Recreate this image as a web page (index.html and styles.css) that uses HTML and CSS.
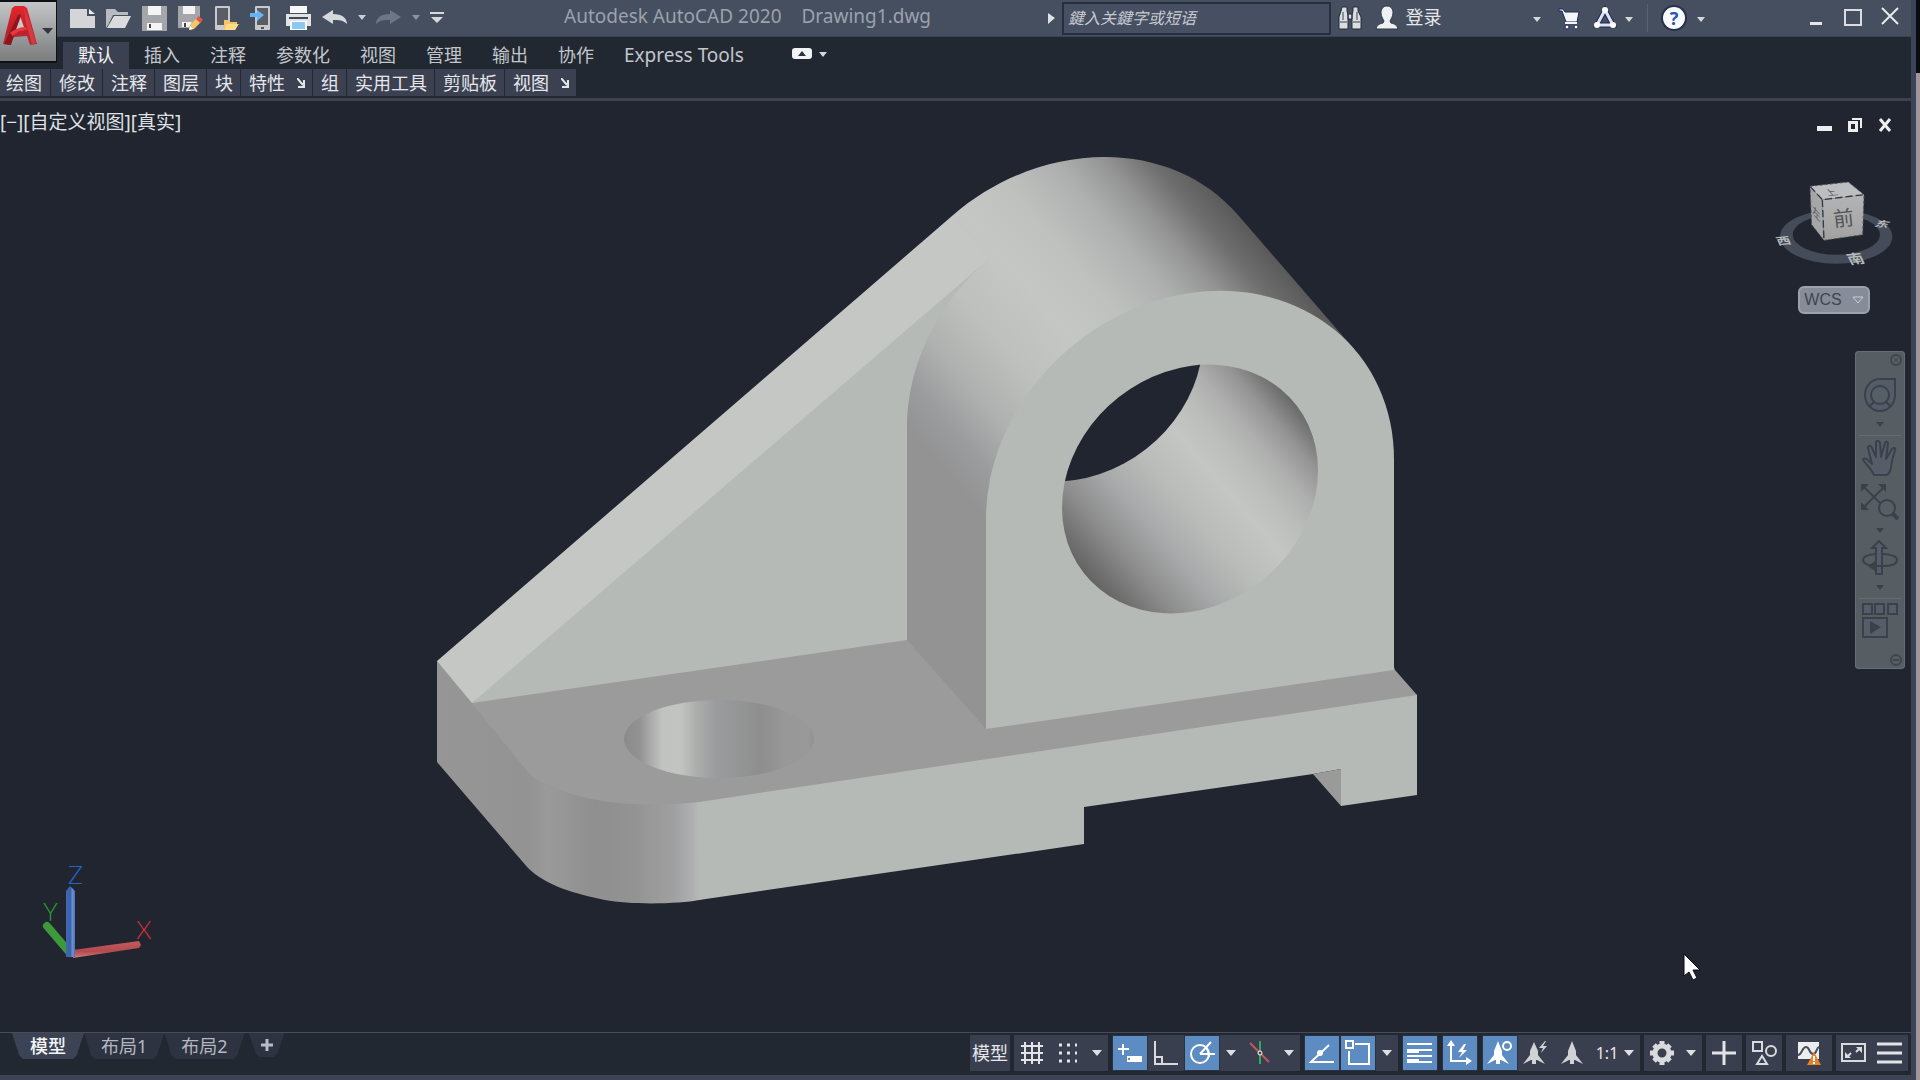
FILE: index.html
```html
<!DOCTYPE html>
<html lang="zh-CN">
<head>
<meta charset="utf-8">
<title>Autodesk AutoCAD 2020 - Drawing1.dwg</title>
<link rel="stylesheet" href="styles.css">
</head>
<body>
<div class="window">
  <header class="head">
    <button class="app-button" aria-label="应用程序菜单">
      <svg width="56" height="60" viewBox="0 0 56 60">
        <defs><linearGradient id="red" x1="0" y1="0" x2="0" y2="1"><stop offset="0" stop-color="#e3262c"/><stop offset=".6" stop-color="#c01f28"/><stop offset="1" stop-color="#a8343a"/></linearGradient></defs>
        <path d="M15 4h9l3 2 10 36-7 1-3-9-13 1-4 8-7-1L12 6z" fill="url(#red)"/>
        <path d="M19 11l6 17-11 1z" fill="#c9cacb"/>
        <path d="M19 11l2 3-7 19-3 10-7-1z" fill="#8f151d"/>
        <path d="M10 31c6-5 12-6 16-6l1 3c-6 0-10 2-14 6z" fill="#e8383c"/>
        <path d="M24 5l6 15 6 21-4 1-6-20z" fill="#d63a40"/>
        <path d="M42 26h11l-5 6z" fill="#33363c"/>
      </svg>
    </button>
    <div class="titlebar">
      <div class="qat">
        <button aria-label="新建"><svg width="26" height="26"><path d="M0 4h17v7h8v12H0z" fill="#d4d5d7"/><path d="M19 4l6 5h-6z" fill="#eee"/></svg></button>
        <button aria-label="打开"><svg width="26" height="26"><path d="M0 4h9l3 3h10v3H7L2 20l-2 3z" fill="#b9bbbe"/><path d="M8 11h17l-6 12H1z" fill="#dadbdd"/></svg></button>
        <button aria-label="保存"><svg width="26" height="26"><path d="M0 1h25v25H0z" fill="#a5a6a9"/><path d="M6 1h13v9H6zM5 18h15v7H5z" fill="#f4f4f4"/><path d="M7 19h2v4H7z" fill="#444"/></svg></button>
        <button aria-label="另存为"><svg width="26" height="26"><path d="M0 1h22v13l-9 9H0z" fill="#a5a6a9"/><path d="M5 1h12v8H5zM4 17h10l-3 5H4z" fill="#f4f4f4"/><path d="M6 18h2v4H6z" fill="#444"/><path d="M11 25l2-6 6-6 4 4-7 7z" fill="#f7c667"/><path d="M18 14l3-3 4 4-3 3z" fill="#e2564c"/><path d="M11 25l1-4 3 3z" fill="#fff"/></svg></button>
        <button aria-label="从移动设备打开"><svg width="26" height="26"><rect x="1" y="1" width="15" height="24" rx="1" fill="#c8c9cb"/><path d="M3 3h11v17H3z" fill="#595d66"/><path d="M10 15h5l1 2h7v2h2l-4 6H10z" fill="#f3c46a"/><path d="M12 19h12l-3 6H11z" fill="#ffdb8a"/></svg></button>
        <button aria-label="保存到移动设备"><svg width="26" height="26"><rect x="5" y="1" width="15" height="24" rx="1" fill="#c8c9cb"/><path d="M7 3h11v17H7z" fill="#595d66"/><path d="M0 8h7V5l7 5-7 6v-4H0z" fill="#63b6f3"/><path d="M11 22h3v2h-3z" fill="#555"/></svg></button>
        <button aria-label="打印"><svg width="26" height="26"><path d="M4 1h17v7H4z" fill="#f7f7f7"/><path d="M0 9h25v12H0z" fill="#e1e2e4"/><path d="M3 12h19v2H3z" fill="#42495a"/><path d="M4 16h17v9H4z" fill="#fff"/><path d="M6 17h13v7H6z" fill="#8cc8f4"/></svg></button>
        <button aria-label="放弃"><svg width="26" height="26"><path d="M0 12L11 5v4c9 0 14 4 14 10-4-4-8-4-14-4v4z" fill="#d6d8db"/></svg></button>
        <button aria-label="放弃列表"><svg width="8" height="26"><path d="M0 10h8l-4 5z" fill="#c9ccd1"/></svg></button>
        <button aria-label="重做"><svg width="26" height="26"><path d="M25 12L14 5v4C5 9 0 13 0 19c4-4 8-4 14-4v4z" fill="#6d7686"/></svg></button>
        <button aria-label="重做列表"><svg width="8" height="26"><path d="M0 10h8l-4 5z" fill="#8b93a1"/></svg></button>
        <button aria-label="自定义快速访问工具栏"><svg width="14" height="26"><path d="M0 7h14v2H0zM1 12h12l-6 6z" fill="#d6d8db"/></svg></button>
      </div>
      <div class="caption"><span>Autodesk AutoCAD 2020</span><span>Drawing1.dwg</span></div>
      <div class="tools">
        <button class="g6" aria-label="折叠搜索"><svg width="8" height="26"><path d="M0 8l7 5-7 6z" fill="#dfe1e4"/></svg></button>
        <input class="search g7" type="text" aria-label="搜索" placeholder="鍵入关鍵字或短语">
        <button class="g12" aria-label="查找"><svg width="24" height="26"><path d="M4 2h5v4l1 4v14H1V12l2-6zM15 2h5v4l3 6v12h-9V10l1-4zM10 9h4v5h-4z" fill="#dcdde0" stroke="#252b3a"/><path d="M2 17h7M15 17h7M5 7v8M19 7v8" stroke="#3a4152"/></svg></button>
        <button class="g7 signin" aria-label="登录"><svg width="24" height="26"><path d="M12 1c4 0 6 3 6 7 0 3-2 6-3 8l1 2c4 1 6 2 7 6H1c1-4 3-5 7-6l1-2C8 14 6 11 6 8c0-4 2-7 6-7z" fill="#eff0f2" stroke="#30384a"/></svg><span>登录</span></button>
        <button class="g16 signcaret" aria-label="登录选项"><svg width="8" height="26"><path d="M0 12h8l-4 5z" fill="#d6d8db"/></svg></button>
        <button class="g12" aria-label="应用商店"><svg width="24" height="26"><path d="M2 4h4l2 3h14l-2 10H9L5 6H2z" fill="#f3f4f6" stroke="#1d2a5c"/><path d="M8 18h12" stroke="#f3f4f6" stroke-width="2"/><circle cx="10" cy="22" r="2" fill="#fff" stroke="#1d2a5c"/><circle cx="19" cy="22" r="2" fill="#fff" stroke="#1d2a5c"/></svg></button>
        <button class="g8" aria-label="保持连接"><svg width="24" height="26"><path d="M12 5L4 20h16z" fill="none" stroke="#1d2a5c" stroke-width="5"/><path d="M12 5L4 20h16z" fill="none" stroke="#dfe3ef" stroke-width="3"/><g fill="#fff"><circle cx="12" cy="5" r="3"/><circle cx="4" cy="20" r="3"/><circle cx="20" cy="20" r="3"/></g></svg></button>
        <button class="g14" aria-label="连接选项"><svg width="8" height="26"><path d="M0 12h8l-4 5z" fill="#d6d8db"/></svg></button>
        <span class="rule"></span>
        <button class="g10 help" aria-label="帮助"><span>?</span></button>
        <button class="g99" aria-label="帮助选项"><svg width="8" height="26"><path d="M0 12h8l-4 5z" fill="#d6d8db"/></svg></button>
        <button class="g13" aria-label="最小化"><svg width="24" height="26"><path d="M6 17h12v3H6z" fill="#e4e5e8"/></svg></button>
        <button class="g13" aria-label="最大化"><svg width="24" height="26"><path d="M4 5h16v15H4z" fill="none" stroke="#dcdde1" stroke-width="2"/></svg></button>
        <button aria-label="关闭"><svg width="24" height="26"><path d="M4 3l16 16M20 3L4 19" stroke="#e8e9eb" stroke-width="2"/></svg></button>
      </div>
    </div>
    <nav class="tabs">
      <button class="tab active">默认</button><button class="tab">插入</button><button class="tab">注释</button><button class="tab">参数化</button><button class="tab">视图</button><button class="tab">管理</button><button class="tab">输出</button><button class="tab">协作</button><button class="tab latin">Express Tools</button>
      <button class="pill" aria-label="最小化功能区"><svg width="36" height="12"><rect x="0" y="1" width="20" height="11" rx="3" fill="#f1f2f4"/><path d="M6 9h8l-4-5z" fill="#2b313d"/><path d="M27 5h8l-4 5z" fill="#d6d8db"/></svg></button>
    </nav>
  </header>
  <div class="panels">
    <button>绘图</button><button>修改</button><button>注释</button><button>图层</button><button>块</button>
    <button>特性<svg width="8" height="10"><path d="M0 0l6 7M7 2v7H1" fill="none" stroke="#e6e7ea" stroke-width="2"/></svg></button>
    <button>组</button><button>实用工具</button><button>剪贴板</button>
    <button>视图<svg width="8" height="10"><path d="M0 0l6 7M7 2v7H1" fill="none" stroke="#e6e7ea" stroke-width="2"/></svg></button>
  </div>

  <main class="viewport">
    <svg class="model" viewBox="0 101 1911 931" role="img" aria-label="三维支座模型">
      <defs>
        <linearGradient id="outer" gradientUnits="userSpaceOnUse" x1="986" y1="518" x2="1281" y2="263">
          <stop offset="0" stop-color="#939394"/><stop offset=".085" stop-color="#9b9c9d"/><stop offset=".19" stop-color="#afb1b0"/><stop offset=".32" stop-color="#bec0be"/><stop offset=".47" stop-color="#c5c7c4"/><stop offset=".6" stop-color="#bfc1bf"/><stop offset=".73" stop-color="#aeb0b0"/><stop offset=".83" stop-color="#949494"/><stop offset=".92" stop-color="#6e6e6e"/><stop offset="1" stop-color="#595959"/>
        </linearGradient>
        <linearGradient id="bore" gradientUnits="userSpaceOnUse" x1="1087" y1="578" x2="1293" y2="400">
          <stop offset="0" stop-color="#636363"/><stop offset=".06" stop-color="#727272"/><stop offset=".16" stop-color="#8d8d8d"/><stop offset=".3" stop-color="#a8a9aa"/><stop offset=".45" stop-color="#babcba"/><stop offset=".6" stop-color="#c4c6c4"/><stop offset=".7" stop-color="#bcbebc"/><stop offset=".8" stop-color="#aeafae"/><stop offset=".9" stop-color="#949494"/><stop offset="1" stop-color="#686868"/>
        </linearGradient>
        <linearGradient id="drill"><stop offset="0" stop-color="#8b8b8b"/><stop offset=".08" stop-color="#929292"/><stop offset=".2" stop-color="#c1c3c1"/><stop offset=".3" stop-color="#c2c4c2"/><stop offset=".38" stop-color="#acaeac"/><stop offset=".48" stop-color="#9b9c9e"/><stop offset=".72" stop-color="#8e8e8e"/><stop offset=".85" stop-color="#989898"/><stop offset=".97" stop-color="#999"/><stop offset="1" stop-color="#929292"/></linearGradient>
        <linearGradient id="corner" gradientUnits="userSpaceOnUse" x1="437" y1="0" x2="700" y2="0"><stop offset="0" stop-color="#969696"/><stop offset=".35" stop-color="#939393"/><stop offset=".42" stop-color="#9a9a9a"/><stop offset=".6" stop-color="#8f8f90"/><stop offset=".75" stop-color="#939393"/><stop offset=".9" stop-color="#a0a0a1"/><stop offset=".96" stop-color="#acadae"/><stop offset="1" stop-color="#b5bab6"/></linearGradient>
        <clipPath id="boreClip"><circle r="1" transform="matrix(128 -18.5 0 123 1190 489)"/></clipPath>
      </defs>
      <!-- base plate -->
      <path d="M437 661L560 740L702 790V899L699 900C680 904 630 905 605 900C575 894 545 885 528 868L437 762z" fill="url(#corner)"/>
      <path d="M698 795L1400 688L1417 695V795L1341 806V769L1313 774L1084 807V844L699 900z" fill="#b5bab6"/>
      <path d="M437 661L907 615L986 715L1390 655L1395 670L1417 695L699 802C655 807 600 806 560 790C545 784 535 780 528 772z" fill="#9b9b9b"/>
      <path d="M1313 774L1341 769V806z" fill="#9a9a9b"/>
      <!-- rib -->
      <path d="M437 661L952 216L1110 200L1000 300L472 703z" fill="#c5c7c4"/>
      <path d="M472 703L989 259L1000 300V626L907 640z" fill="#b5bab6"/>
      <!-- boss: cylinder surface, side, front face and bore -->
      <path d="M986 535L907 445V427C907 366 937 303 989 259L952 216C1042 138 1171 137 1238 215L1354 349L1190 489z" fill="url(#outer)"/>
      <path d="M907 427L990 521V729H986L907 640z" fill="#939393"/>
      <path d="M-1 1.074V0A1 1 0 0 1 1 0V1.074z" transform="matrix(204 -29.500 0 196 1190 489)" fill="#b5bab6"/>
      <g clip-path="url(#boreClip)">
        <rect x="1050" y="350" width="280" height="280" fill="url(#bore)"/>
        <circle r="1" transform="matrix(128 -18.500 0 123 1075 357)" fill="#212530"/>
      </g>
      <ellipse cx="719" cy="739" rx="95" ry="39" fill="url(#drill)"/>
    </svg>

    <div class="view-label">[−][自定义视图][真实]</div>
    <div class="doc-controls">
      <button aria-label="最小化视口"><svg width="16" height="16"><path d="M0 9h15v5H0z" fill="#eee"/></svg></button>
      <button aria-label="还原视口"><svg width="16" height="16"><path d="M5 1h10v10h-2V3H5zM1 4h10v11H1zM4 7v5h4V7z" fill="#eee" fill-rule="evenodd"/></svg></button>
      <button aria-label="关闭视口"><svg width="16" height="16"><path d="M3 2l10 12M13 2L3 14" stroke="#eee" stroke-width="3"/></svg></button>
    </div>

    <div class="cube">
      <svg width="150" height="100" viewBox="30 40 450 300">
        <defs><linearGradient id="face" x1="0" y1="0" x2="0" y2="1"><stop offset="0" stop-color="#b3b4b6"/><stop offset="1" stop-color="#a1a1a0"/></linearGradient></defs>
        <path fill-rule="evenodd" fill="#444c5a" d="M120 231a168 81 0 1 0 337 0a168 81 0 1 0-337 0zM158 225a131 60 0 1 0 262 0a131 60 0 1 0-262 0z"/>
        <path d="M210 80L325 67L372 105L247 120z" fill="#bdbebf"/>
        <path d="M210 80L247 120L252 242L215 195z" fill="#a5a6a8"/>
        <path d="M247 120L372 105L368 225L252 242z" fill="url(#face)"/>
        <path d="M210 80L247 120L372 105M247 120L252 242" fill="none" stroke="#333740" stroke-width="4" stroke-dasharray="22 9"/>
        <path d="M210 80L325 67L372 105L368 225L252 242L215 195z" fill="none" stroke="#50545c" stroke-width="3" stroke-dasharray="8 7"/>
        <text x="280" y="198" font-size="62" fill="#54565a" transform="rotate(-6 310 180)">前</text>
        <text x="0" y="0" font-size="32" fill="#54565a" transform="matrix(1 -.1 .6 .7 264 108)">上</text>
        <text x="0" y="0" font-size="34" fill="#54565a" transform="matrix(.7 .8 0 1 217 160)">左</text>
        <g fill="#b7b9bb" font-weight="700"><text x="0" y="0" font-size="42" transform="matrix(1 -.1 .3 .7 114 256)">西</text><text x="0" y="0" font-size="48" transform="matrix(1 -.1 .4 .8 330 314)">南</text><text x="0" y="0" font-size="40" transform="matrix(1 .1 -.4 .6 402 200)">东</text></g>
      </svg>
      <button class="wcs">WCS<svg width="12" height="8"><path d="M1 1h10l-5 6z" fill="none" stroke="#c9ccd4"/></svg></button>
    </div>

    <nav class="navbar" aria-label="导航栏">
      <button class="n-close" aria-label="关闭导航栏"><svg width="12" height="12"><circle cx="6" cy="6" r="5" fill="none" stroke="#40464e" stroke-width="2"/><path d="M4 4l4 4M8 4l-4 4" stroke="#40464e"/></svg></button>
      <button class="n40" aria-label="控制盘"><svg width="36" height="36"><path d="M18 2h15v16a15 16 0 1 1-15-16z" fill="#555b68" stroke="#3b414a" stroke-width="2"/><circle cx="18" cy="18" r="9" fill="#565e66" stroke="#3b414a" stroke-width="2"/><path d="M12 25l-5 5M24 25l5 5" stroke="#3b414a" stroke-width="2"/></svg></button>
      <button class="n20" aria-label="控制盘选项"><svg width="8" height="6"><path d="M0 0h8l-4 5z" fill="#3b414a"/></svg></button>
      <span class="n-rule"></span>
      <button class="n44" aria-label="平移"><svg width="36" height="36"><path d="M12 35c-2-5-8-11-11-15 0-2 3-2 5 0l4 4L6 8c0-3 3-3 4 0l4 9V3c0-3 3-3 4 0l1 14 4-14c1-2 3-2 3 1l-2 15 6-10c2-2 4-1 3 1-3 10-4 14-4 18-1 4-3 7-5 7z" fill="#565d69" stroke="#3b414a" stroke-width="2" stroke-linejoin="round"/></svg></button>
      <button class="n44" aria-label="范围缩放"><svg width="38" height="36"><path d="M2 2l22 22M24 2L2 24" stroke="#3b414a" stroke-width="2"/><path d="M0 0h8L0 8zM25 0v8l-8-8zM0 26v-8l8 8z" fill="#3b414a"/><circle cx="26" cy="24" r="8" fill="#565e66" stroke="#3b414a" stroke-width="2"/><path d="M31 29l6 6" stroke="#3b414a" stroke-width="4"/></svg></button>
      <button class="n14" aria-label="缩放选项"><svg width="8" height="6"><path d="M0 0h8l-4 5z" fill="#3b414a"/></svg></button>
      <button class="n40" aria-label="动态观察"><svg width="36" height="36"><path d="M14 34V8h-4l7-7 7 7h-4v26z" fill="#565d69" stroke="#3b414a" stroke-width="2"/><path d="M14 14C6 14 1 17 1 20s5 6 12 6M20 14c8 0 15 2 15 6s-6 6-14 6H9" fill="none" stroke="#3b414a" stroke-width="2"/><path d="M6 26l7-5v10z" fill="#3b414a"/></svg></button>
      <button class="n20" aria-label="动态观察选项"><svg width="8" height="6"><path d="M0 0h8l-4 5z" fill="#3b414a"/></svg></button>
      <span class="n-rule"></span>
      <button class="n44" aria-label="ShowMotion"><svg width="36" height="36"><path d="M1 1h9v10H1zM13 1h9v10h-9zM26 1h9v10h-9zM1 15h24v19H1z" fill="#565d69" stroke="#3b414a" stroke-width="2"/><path d="M8 18l11 6-11 7z" fill="#3b414a"/></svg></button>
      <button class="n-close n-menu" aria-label="导航栏选项"><svg width="12" height="12"><circle cx="6" cy="6" r="5" fill="none" stroke="#40464e" stroke-width="2"/><path d="M3 6h6" stroke="#40464e" stroke-width="2"/></svg></button>
    </nav>

    <svg class="ucs" width="160" height="130" viewBox="0 -10 160 130">
      <defs>
        <linearGradient id="zb"><stop offset="0" stop-color="#3f68b0"/><stop offset=".5" stop-color="#3a62aa"/><stop offset=".7" stop-color="#6c91d2"/><stop offset="1" stop-color="#4a73ba"/></linearGradient>
        <linearGradient id="xr" x1="0" y1="0" x2="0" y2="1"><stop offset="0" stop-color="#c45a5e"/><stop offset=".6" stop-color="#b24a4e"/><stop offset="1" stop-color="#cf7b7b"/></linearGradient>
      </defs>
      <path d="M73 110l66-9 2 4-2 3-66 10z" fill="url(#xr)"/>
      <path d="M47 86l23 27" stroke="#3c9a3a" stroke-width="8" stroke-linecap="round"/>
      <path d="M66 51l4-5 5 5v66h-9z" fill="url(#zb)"/>
      <text x="68" y="44" fill="#2465c8">Z</text><text x="43" y="81" fill="#2a9a34">Y</text><text x="136" y="99" fill="#cb3238">X</text>
    </svg>
    <svg class="cursor" width="20" height="28" viewBox="-2 -2 20 28"><path d="M0 0v22l5-4 4 8 4-2-4-8h7z" fill="#fff" stroke="#0b0d14"/></svg>
  </main>

  <footer class="status">
    <div class="layouts">
      <button class="sheet on">模型</button><button class="sheet">布局1</button><button class="sheet">布局2</button><button class="sheet add" aria-label="新建布局"><svg width="12" height="12"><path d="M6 0v12M0 6h12" stroke="#b9bdc6" stroke-width="3"/></svg></button>
    </div>
    <div class="toggles">
      <div class="grp"><button class="w40">模型</button></div>
      <div class="grp">
        <button class="w36" aria-label="栅格"><svg width="24" height="24"><path d="M5 1v22M12 1v22M19 1v22M1 5h22M1 12h22M1 19h22" stroke="#e3e4e7" stroke-width="2"/></svg></button>
        <button class="w36" aria-label="捕捉"><svg width="20" height="20"><path d="M1 2h18M1 10h18M1 18h18" stroke="#e3e4e7" stroke-width="3" stroke-dasharray="3 5"/></svg></button>
        <button class="w22" aria-label="捕捉选项"><svg width="10" height="6"><path d="M0 0h10l-5 6z" fill="#dfe0e3"/></svg></button>
      </div>
      <div class="grp">
        <button class="w36 blue" aria-label="动态输入"><svg width="26" height="24"><path d="M6 3v11M1 8h11" stroke="#fff" stroke-width="2"/><path d="M10 15h15v6H10z" fill="#fff"/><path d="M11 17h2v2h-2z" fill="#5c8cc2"/></svg></button>
        <button class="w36" aria-label="正交"><svg width="26" height="26"><path d="M2 1v23h23M2 17h7v7" fill="none" stroke="#d8dade" stroke-width="2"/></svg></button>
        <button class="w36 blue" aria-label="极轴追踪"><svg width="28" height="26"><circle cx="12" cy="14" r="9" fill="none" stroke="#fff" stroke-width="2"/><path d="M12 14L23 2M12 14h15M18 7c2 3 3 7 3 10" fill="none" stroke="#fff" stroke-width="2"/></svg></button>
        <button class="w22" aria-label="极轴选项"><svg width="10" height="6"><path d="M0 0h10l-5 6z" fill="#dfe0e3"/></svg></button>
        <button class="w36" aria-label="等轴测草图"><svg width="22" height="26"><path d="M1 3l19 19" stroke="#c3565c" stroke-width="2"/><path d="M11 1v23" stroke="#38a55a" stroke-width="2"/><circle cx="11" cy="13" r="2" fill="#444" stroke="#fff"/></svg></button>
        <button class="w22" aria-label="等轴测选项"><svg width="10" height="6"><path d="M0 0h10l-5 6z" fill="#dfe0e3"/></svg></button>
      </div>
      <div class="grp">
        <button class="w36 blue" aria-label="对象捕捉追踪"><svg width="26" height="24"><path d="M20 4L2 21h23" fill="none" stroke="#fff" stroke-width="2"/><circle cx="11" cy="12" r="3" fill="#fff"/></svg></button>
        <button class="w36 blue" aria-label="对象捕捉"><svg width="26" height="26"><path d="M10 4h14v20H4V11" fill="none" stroke="#fff" stroke-width="2"/><path d="M1 1h7v7H1z" fill="none" stroke="#fff" stroke-width="2"/></svg></button>
        <button class="w22" aria-label="捕捉模式"><svg width="10" height="6"><path d="M0 0h10l-5 6z" fill="#dfe0e3"/></svg></button>
      </div>
      <div class="grp"><button class="w36 blue" aria-label="线宽"><svg width="26" height="24"><path d="M0 2h25v2H0zM0 8h12v4H0zM12 8h13v2H12zM0 14h12v2H0zM12 14h13v2H12zM0 18h12v4H0zM12 20h13v2H12z" fill="#fff"/></svg></button></div>
      <div class="grp"><button class="w36 blue" aria-label="动态 UCS"><svg width="26" height="26"><path d="M4 4v17h17" fill="none" stroke="#fff" stroke-width="2"/><path d="M0 6l4-6 4 6zM19 17l6 4-6 4zM17 4l-6 8h4l-3 6 8-8h-4l3-6z" fill="#fff"/></svg></button></div>
      <div class="grp">
        <button class="w36 blue" aria-label="显示注释对象"><svg width="26" height="26"><path d="M11 1l4 10v4l7 9-8-4h-1v4H9v-4H8l-8 4 7-9v-4z" fill="#fff"/><circle cx="20" cy="6" r="4" fill="none" stroke="#fff" stroke-width="2"/></svg></button>
        <button class="w36" aria-label="自动缩放"><svg width="26" height="26"><path d="M11 2l4 9v4l7 9-8-4h-1v4H9v-4H8l-8 4 7-9v-4z" fill="#d0d2d6"/><path d="M22 1l-6 7h4l-2 5 6-7h-4l3-5z" fill="#d0d2d6"/></svg></button>
        <button class="w36" aria-label="注释可见性"><svg width="22" height="26"><path d="M11 1l4 10v4l7 9-8-4h-1v4H9v-4H8l-8 4 7-9v-4z" fill="#d0d2d6"/></svg></button>
        <button class="w50">1:1<svg width="10" height="6"><path d="M0 0h10l-5 6z" fill="#dfe0e3"/></svg></button>
      </div>
      <div class="grp">
        <button class="w36" aria-label="切换工作空间"><svg width="24" height="24"><circle cx="12" cy="12" r="7" fill="none" stroke="#d9dade" stroke-width="5"/><path d="M12 0v4M12 20v4M0 12h4M20 12h4M4 4l3 3M17 17l3 3M20 4l-3 3M4 20l3-3" stroke="#d9dade" stroke-width="5"/></svg></button>
        <button class="w22" aria-label="工作空间选项"><svg width="10" height="6"><path d="M0 0h10l-5 6z" fill="#dfe0e3"/></svg></button>
      </div>
      <div class="grp"><button class="w36" aria-label="注释监视器"><svg width="24" height="24"><path d="M12 0v24M0 12h24" stroke="#e3e4e7" stroke-width="3"/></svg></button></div>
      <div class="grp"><button class="w36" aria-label="隔离对象"><svg width="26" height="26"><path d="M2 2h9v9H2zM11 16l-5 8h10z" fill="none" stroke="#d8dade" stroke-width="2"/><circle cx="20" cy="11" r="5" fill="none" stroke="#d8dade" stroke-width="2"/></svg></button></div>
      <div class="grp"><button class="w46" aria-label="硬件加速"><svg width="24" height="26"><path d="M1 2h21v17H1z" fill="#eceded"/><path d="M1 15c4 0 4-8 8-8s3 7 7 7 3-6 6-7" fill="none" stroke="#49505c" stroke-width="2"/><path d="M17 12l7 13H10z" fill="#e8812c"/><path d="M16 16h2v5h-2zM16 22h2v2h-2z" fill="#fff"/></svg></button></div>
      <div class="grp">
        <button class="w36" aria-label="全屏显示"><svg width="26" height="20"><path d="M1 1h23v17H1z" fill="none" stroke="#d8dade" stroke-width="2"/><path d="M15 4h6v6zM4 9v6h6z" fill="#d8dade"/><path d="M15 9l3-3M10 10l-4 4" stroke="#d8dade" stroke-width="2"/></svg></button>
        <button class="w36" aria-label="自定义"><svg width="26" height="24"><path d="M0 3h25M0 12h25M0 21h25" stroke="#e3e4e7" stroke-width="3"/></svg></button>
      </div>
    </div>
  </footer>
</div>
<div class="backdrop"></div>
</body>
</html>
```
FILE: styles.css
```css
* { box-sizing: border-box; }
body {
  margin: 0;
  min-height: 100vh;
  display: flex;
  background: #0a0b0e;
  color: #e6e7ea;
  font: 18px/24px "Noto Sans", "Noto Sans CJK SC", sans-serif;
  overflow: hidden;
}
button {
  margin: 0;
  padding: 0;
  border: 0;
  background: none;
  color: inherit;
  font: inherit;
  display: flex;
  align-items: center;
  justify-content: center;
  white-space: nowrap;
}
svg { display: block; flex: none; }

.window {
  flex: 1;
  min-width: 0;
  min-height: 100vh;
  display: flex;
  flex-direction: column;
  border-right: 5px solid #3b4457;
  border-bottom: 5px solid #3d4255;
  background: #212530;
}
.backdrop { width: 4px; margin-top: 73px; background: #a1979b; }

.head {
  display: grid;
  grid-template-columns: 57px 1fr;
  grid-template-rows: 37px 32px;
  background: #212832;
}
.app-button {
  grid-row: 1 / 3;
  align-self: start;
  border: solid #0e1116;
  border-width: 2px 1px 2px 0;
  height: 63px;
  background: linear-gradient(#c4c5c6, #7b7c7e);
}
.titlebar {
  display: flex;
  align-items: center;
  justify-content: space-between;
  background: #454f60;
  border-bottom: 1px solid #3b4456;
}
.qat { display: flex; gap: 10px; padding-left: 13px; }
.caption {
  flex: 1;
  display: flex;
  gap: 20px;
  padding: 0 0 4px 120px;
  color: #9ba2ad;
  font-size: 19px;
  white-space: nowrap;
}
.tools { display: flex; align-items: center; padding-right: 9px; }
.g6 { margin-right: 6px; }
.g7 { margin-right: 7px; }
.g8 { margin-right: 8px; }
.g10 { margin-right: 10px; }
.g12 { margin-right: 12px; }
.g13 { margin-right: 13px; }
.g14 { margin-right: 14px; }
.g16 { margin-right: 16px; }
.g99 { margin-right: 99px; }
.search {
  width: 269px;
  height: 33px;
  padding: 0 4px 3px;
  border: 2px solid #272e3d;
  background: #474f62;
  color: #d0d3d9;
  font: italic 16px/24px "Noto Sans CJK SC", sans-serif;
}
.search::placeholder { color: #c6cad1; }
.signin { gap: 7px; width: 68px; }
.signin span { padding-bottom: 2px; }
.signcaret { margin-left: 84px; }
.rule { width: 1px; height: 28px; margin-right: 13px; background: #56617a; }
.help {
  width: 26px;
  height: 26px;
  border: 2px solid #27304a;
  border-radius: 50%;
  background: #fafbfd;
  color: #2a55b8;
  font: bold 18px/20px "Noto Sans", sans-serif;
}

.tabs { display: flex; align-items: flex-end; padding-left: 6px; color: #c3c6cb; }
.tab { height: 27px; padding: 0 15px 1px; }
.tab.active { background: #3c4152; color: #f2f3f5; }
.tab.latin { font-size: 19px; }
.pill { height: 27px; padding: 0 0 6px; margin-left: 33px; }

.panels {
  display: flex;
  height: 32px;
  padding-bottom: 5px;
  border-bottom: 3px solid #3d4152;
  background: #212832;
}
.panels button {
  height: 27px;
  padding: 0 7px 0 8px;
  border-right: 1px solid #222833;
  background: #3c4152;
}
.panels button:first-child { padding: 0 8px 0 6px; }
.panels svg { margin-left: 12px; }

.viewport { flex: 1; position: relative; min-height: 0; overflow: hidden; }
.model { position: absolute; inset: 0; width: 100%; height: 100%; }
.view-label { position: absolute; left: 0; top: 9px; color: #dfe1e4; font-size: 19px; }
.doc-controls { position: absolute; right: 18px; top: 16px; display: flex; gap: 14px; }
.cube {
  position: absolute;
  right: 11px;
  top: 72px;
  display: flex;
  flex-direction: column;
  gap: 13px;
  font-family: "Noto Sans CJK SC", sans-serif;
}
.wcs {
  width: 72px;
  height: 28px;
  margin-left: 48px;
  gap: 10px;
  border: 2px solid #9da1ac;
  border-radius: 6px;
  background: #878c99;
  color: #41464f;
  font: 16px/20px "Liberation Sans", sans-serif;
}
.navbar {
  position: absolute;
  right: 6px;
  top: 250px;
  width: 50px;
  display: flex;
  flex-direction: column;
  align-items: stretch;
  border-radius: 4px;
  background: #565e63;
  box-shadow: inset 0 0 0 1px #666d73;
}
.n14 { height: 14px; }
.n20 { height: 20px; }
.n40 { height: 40px; }
.n44 { height: 44px; }
.n-rule { height: 1px; margin: 0 4px; background: #646c72; }
.n-close { height: 24px; justify-content: flex-end; align-items: flex-start; padding: 3px; }
.n-menu { height: 26px; align-items: flex-end; }
.ucs { position: absolute; left: 0; bottom: 72px; font: 300 25px "Lato", sans-serif; }
.cursor { position: absolute; right: 209px; bottom: 52px; }

.status {
  display: flex;
  justify-content: space-between;
  align-items: flex-start;
  height: 43px;
  border-top: 1px solid #464c58;
  background: #212832;
}
.layouts { display: flex; padding-left: 12px; color: #b4b8c0; }
.sheet {
  height: 26px;
  padding: 0 17px 1px;
  background: #2d3340;
  clip-path: polygon(0 0, 100% 0, calc(100% - 7px) 85%, calc(100% - 11px) 100%, 11px 100%, 7px 85%);
}
.sheet.on { padding: 0 18px 1px; background: #3c4355; color: #f4f5f7; font-weight: 500; }
.sheet.add { margin-left: 4px; padding: 0 12px; height: 24px; }
.toggles { display: flex; gap: 4px; padding: 2px 3px 0 0; }
.grp { display: flex; height: 36px; background: #3a3f50; }
.blue { border: 1px solid #2a3140; background: #5c8cc2; }
.w22 { width: 22px; }
.w36 { width: 36px; }
.w40 { width: 40px; }
.w46 { width: 46px; }
.w50 { width: 50px; gap: 6px; font-size: 16px; }
```
